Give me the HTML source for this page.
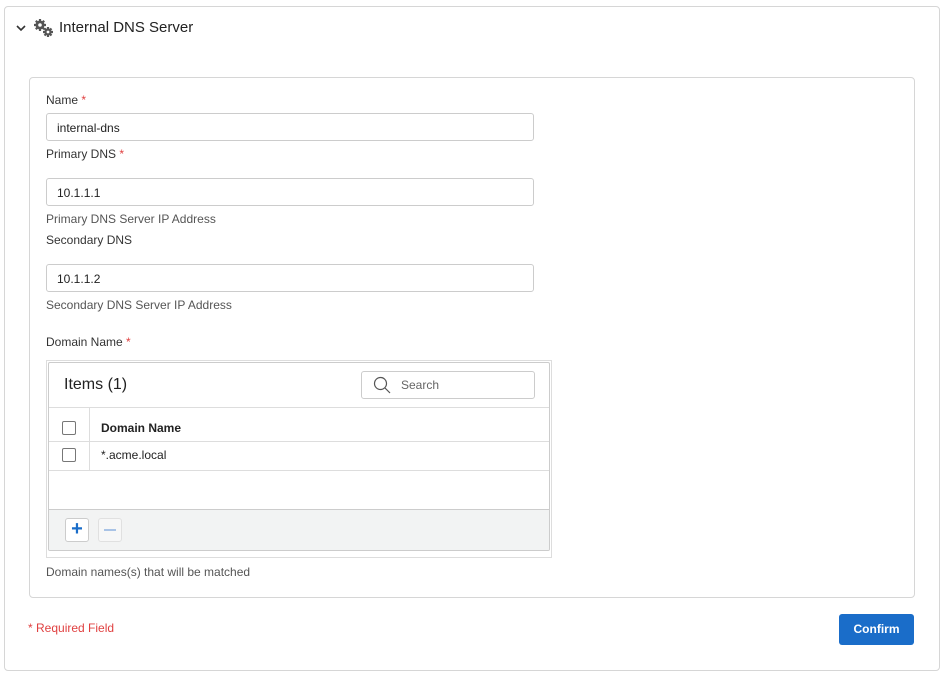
<!DOCTYPE html><html><head><style>
body{margin:0;width:950px;height:683px;background:#fff;font-family:"Liberation Sans",sans-serif;position:relative;overflow:hidden}
.a{position:absolute}
.lbl{font-size:12px;color:#333}
.star{color:#e04040}
.inp{position:absolute;left:46px;width:488px;height:26px;border:1px solid #ccc;border-radius:3px;font-size:12px;color:#222;box-sizing:border-box;padding:7px 10px}
.hint{font-size:12px;color:#555}
.cb{position:absolute;width:12px;height:12px;border:1px solid #777;border-radius:2px;background:#fff}
</style></head><body>
<div class="a" style="left:4px;top:6px;width:934px;height:663px;border:1px solid #d6d6d6;border-radius:4px"></div>
<svg class="a" style="left:15px;top:23px" width="12" height="10"><path d="M2 3 L6 7 L10 3" fill="none" stroke="#333" stroke-width="1.6"/></svg>
<svg class="a" style="left:33px;top:18px" width="22" height="20" viewBox="0 0 22 20"><g fill="#555"><circle cx="7" cy="7" r="4.5"/><circle cx="15" cy="14" r="3.6"/></g><g stroke="#555" stroke-width="2.2"><path d="M7 1v12M1 7h12M2.8 2.8l8.4 8.4M11.2 2.8l-8.4 8.4"/><path d="M15 9v10M10 14h10M11.5 10.5l7 7M18.5 10.5l-7 7"/></g><circle cx="7" cy="7" r="1.8" fill="#fff"/><circle cx="15" cy="14" r="1.4" fill="#fff"/></svg>
<div class="a" style="left:59px;top:19px;font-size:15px;color:#222">Internal DNS Server</div>
<div class="a" style="left:29px;top:77px;width:884px;height:519px;border:1px solid #d6d6d6;border-radius:4px"></div>
<div class="a lbl" style="left:46px;top:93px">Name <span class="star">*</span></div>
<div class="inp" style="top:113px;height:28px">internal-dns</div>
<div class="a lbl" style="left:46px;top:147px">Primary DNS <span class="star">*</span></div>
<div class="inp" style="top:178px;height:28px">10.1.1.1</div>
<div class="a hint" style="left:46px;top:212px">Primary DNS Server IP Address</div>
<div class="a lbl" style="left:46px;top:233px">Secondary DNS</div>
<div class="inp" style="top:264px;height:28px">10.1.1.2</div>
<div class="a hint" style="left:46px;top:298px">Secondary DNS Server IP Address</div>
<div class="a lbl" style="left:46px;top:335px">Domain Name <span class="star">*</span></div>
<div class="a" style="left:46px;top:360px;width:504px;height:196px;border:1px solid #ddd"></div>
<div class="a" style="left:48px;top:362px;width:500px;height:187px;border:1px solid #ccc;border-radius:2px;overflow:hidden">
 <div class="a" style="left:15px;top:13px;font-size:16px;color:#222">Items (1)</div>
 <div class="a" style="left:312px;top:8px;width:172px;height:26px;border:1px solid #ccc;border-radius:3px"></div>
 <svg class="a" style="left:324px;top:13px" width="18" height="18"><circle cx="7.5" cy="7.5" r="6" fill="none" stroke="#555" stroke-width="1.2"/><path d="M12 12l5 5" stroke="#555" stroke-width="1.2"/></svg>
 <div class="a" style="left:352px;top:15px;font-size:12px;color:#666">Search</div>
 <div class="a" style="left:0;top:44px;width:500px;border-top:1px solid #ddd"></div>
 <div class="a" style="left:40px;top:44px;height:64px;border-left:1px solid #ddd"></div>
 <div class="cb" style="left:13px;top:58px"></div>
 <div class="a" style="left:52px;top:58px;font-size:12px;font-weight:bold;color:#222">Domain Name</div>
 <div class="a" style="left:0;top:78px;width:500px;border-top:1px solid #ddd"></div>
 <div class="cb" style="left:13px;top:85px"></div>
 <div class="a" style="left:52px;top:85px;font-size:12px;color:#222">*.acme.local</div>
 <div class="a" style="left:0;top:107px;width:500px;border-top:1px solid #ddd"></div>
 <div class="a" style="left:0;top:146px;width:500px;height:42px;background:#f2f3f3;border-top:1px solid #ccc"></div>
 <div class="a" style="left:16px;top:155px;width:22px;height:22px;background:#fff;border:1px solid #ccc;border-radius:3px;color:#1a6dc9;font-size:20px;font-weight:bold;text-align:center;line-height:21px">+</div>
 <div class="a" style="left:49px;top:155px;width:22px;height:22px;background:#f7f7f7;border:1px solid #e0e0e0;border-radius:3px"><div class="a" style="left:5px;top:10px;width:12px;height:2px;background:#a9c3e6"></div></div>
</div>
<div class="a hint" style="left:46px;top:565px">Domain names(s) that will be matched</div>
<div class="a" style="left:28px;top:621px;font-size:12px;color:#e04040">* Required Field</div>
<div class="a" style="left:839px;top:614px;width:75px;height:31px;background:#1a6dc9;border-radius:3px;color:#fff;font-size:12px;font-weight:bold;text-align:center;line-height:31px">Confirm</div>
</body></html>
